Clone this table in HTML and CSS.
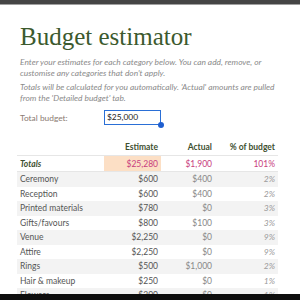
FILE: index.html
```html
<!DOCTYPE html>
<html>
<head>
<meta charset="utf-8">
<link rel="stylesheet" href="styles.css">
</head>
<body>
<div class="topbar"></div>
<main class="content">
  <h1 class="title">Budget estimator</h1>
  <p class="note">Enter your estimates for each category below. You can add, remove, or customise any categories that don't apply.</p>
  <p class="note">Totals will be calculated for you automatically. 'Actual' amounts are pulled from the 'Detailed budget' tab.</p>
  <div class="total-row">
    <span class="total-label">Total budget:</span>
    <span class="total-input">$25,000<span class="handle"></span></span>
  </div>
  <table class="budget">
    <thead>
      <tr><th class="name"></th><th>Estimate</th><th>Actual</th><th>% of budget</th></tr>
    </thead>
    <tbody>
      <tr class="totals"><td class="name">Totals</td><td class="est">$25,280</td><td>$1,900</td><td>101%</td></tr>
      <tr class="alt"><td class="name">Ceremony</td><td class="est">$600</td><td class="act">$400</td><td class="pct">2%</td></tr>
      <tr><td class="name">Reception</td><td class="est">$600</td><td class="act">$400</td><td class="pct">2%</td></tr>
      <tr class="alt"><td class="name">Printed materials</td><td class="est">$780</td><td class="act">$0</td><td class="pct">3%</td></tr>
      <tr><td class="name">Gifts/favours</td><td class="est">$800</td><td class="act">$100</td><td class="pct">3%</td></tr>
      <tr class="alt"><td class="name">Venue</td><td class="est">$2,250</td><td class="act">$0</td><td class="pct">9%</td></tr>
      <tr><td class="name">Attire</td><td class="est">$2,250</td><td class="act">$0</td><td class="pct">9%</td></tr>
      <tr class="alt"><td class="name">Rings</td><td class="est">$500</td><td class="act">$1,000</td><td class="pct">2%</td></tr>
      <tr><td class="name">Hair &amp; makeup</td><td class="est">$250</td><td class="act">$0</td><td class="pct">1%</td></tr>
      <tr class="alt"><td class="name">Flowers</td><td class="est">$300</td><td class="act">$0</td><td class="pct">1%</td></tr>
    </tbody>
  </table>
</main>
<div class="bottombar"></div>
</body>
</html>
```
FILE: styles.css
```css
html, body {
  margin: 0;
  padding: 0;
  background: #fff;
  overflow: hidden;
}
body {
  font-family: Lato, "Noto Sans", sans-serif;
  width: 300px;
  height: 300px;
}
.topbar {
  height: 4px;
  background: #454545;
  border-bottom: 1px solid #a0a0a0;
}
.content {
  padding: 0 17px;
}
.title {
  font-family: "Liberation Serif", serif;
  font-weight: normal;
  font-size: 25px;
  color: #3c5a2e;
  margin: 18px 0 6px 3px;
  line-height: 28px;
}
.note {
  font-style: italic;
  font-size: 8.4px;
  line-height: 11px;
  color: #8a8a8a;
  margin: 0 0 3px 3px;
}
.total-row {
  display: flex;
  align-items: center;
  margin: 6px 0 0 3px;
  height: 15px;
}
.total-label {
  width: 84px;
  font-size: 8.4px;
  color: #8b7b72;
}
.total-input {
  position: relative;
  box-sizing: border-box;
  width: 57px;
  height: 15px;
  border: 1.5px solid #2a6fd6;
  font-size: 8.4px;
  line-height: 12px;
  padding-left: 2px;
  color: #222;
}
.handle {
  position: absolute;
  right: -3.5px;
  bottom: -3.5px;
  width: 6px;
  height: 6px;
  border-radius: 50%;
  background: #1f5fd0;
}
.budget {
  margin-top: 14px;
  border-collapse: collapse;
  width: 261px;
  font-size: 8.5px;
  table-layout: fixed;
}
.budget th, .budget td {
  padding: 0 3px;
  height: 14.5px;
  text-align: right;
  white-space: nowrap;
}
.budget th.name, .budget td.name {
  text-align: left;
  width: 81px;
}
.budget th {
  height: 16px;
  color: #3e4f30;
  font-weight: bold;
  border-bottom: 1px solid #e6e6e6;
}
.budget th:nth-child(2), .budget td:nth-child(2) { width: 51px; }
.budget th:nth-child(3), .budget td:nth-child(3) { width: 48px; }
.budget td { color: #555; }
.budget td.act { color: #888; }
.budget td.pct { color: #9a9a9a; font-style: italic; }
.budget tr.totals td {
  color: #c8407e;
  border-bottom: 1px solid #e6e6e6;
  height: 15px;
}
.budget tr.totals td.name {
  color: #3e4f30;
  font-weight: bold;
  font-style: italic;
}
.budget tr.totals td.est {
  background: #fcdfc5;
}
.budget tr.alt td { background: #f3f3f3; }
.bottombar {
  position: fixed;
  left: 0;
  right: 0;
  bottom: 0;
  height: 6px;
  background: #0e0e0e;
}
```
